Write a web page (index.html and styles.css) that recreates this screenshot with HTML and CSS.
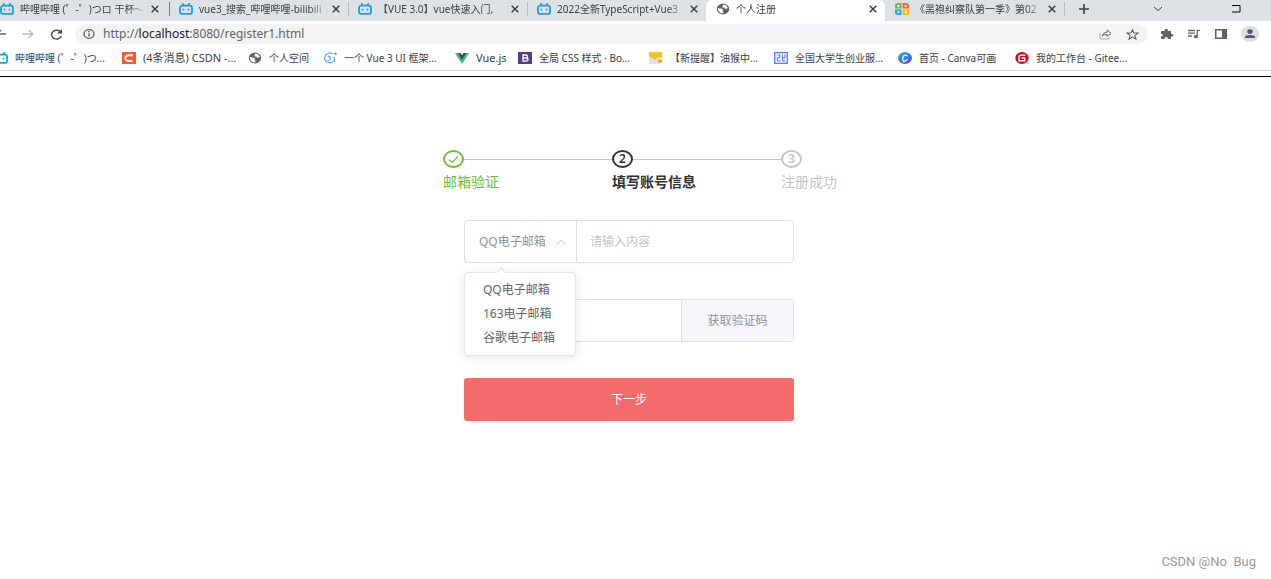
FILE: index.html
```html
<!DOCTYPE html>
<html lang="zh-CN">
<head>
<meta charset="utf-8">
<title>个人注册</title>
<link rel="stylesheet" href="styles.css">
</head>
<body>
<svg class="defs" aria-hidden="true">
  <symbol id="bili" viewBox="0 0 14 12"><path d="M3.5 0.5 5 2.3M10.5 0.5 9 2.3" stroke="#12a5dc" stroke-width="1.5" stroke-linecap="round"/><rect x="1" y="2.7" width="12" height="8.2" rx="2" fill="none" stroke="#12a5dc" stroke-width="1.8"/><path d="M4.5 5.8v1.8M9.5 5.8v1.8" stroke="#12a5dc" stroke-width="1.5"/></symbol>
  <symbol id="globe" viewBox="0 0 14 12"><ellipse cx="7" cy="6" rx="6.2" ry="5.4" fill="#5f6368"/><path d="M1.8 5.2 5 5.4 7.2 6.8 6.4 8.2 8 9.2 6.2 10.4Q2 9.7 1.8 5.2ZM7.2 1.6 10 2.2 12 5 9.4 6 8.2 4.6 6.2 4.4Z" fill="#fff"/></symbol>
  <symbol id="close" viewBox="0 0 10 10"><path d="M1.7 1.7 8.3 8.3M8.3 1.7 1.7 8.3" stroke="#3c4043" stroke-width="1.5"/></symbol>
</svg>
<header class="browser">
  <div class="tabs">
    <div class="tab first"><svg class="ico"><use href="#bili"/></svg><span class="tab-title">哔哩哔哩 (゜-゜)つロ 干杯~-</span><button class="close" aria-label="关闭"><svg><use href="#close"/></svg></button></div>
    <div class="tab line dark"><svg class="ico"><use href="#bili"/></svg><span class="tab-title">vue3_搜索_哔哩哔哩-bilibili</span><button class="close" aria-label="关闭"><svg><use href="#close"/></svg></button></div>
    <div class="tab line"><svg class="ico"><use href="#bili"/></svg><span class="tab-title">【VUE 3.0】vue快速入门,</span><button class="close" aria-label="关闭"><svg><use href="#close"/></svg></button></div>
    <div class="tab line"><svg class="ico"><use href="#bili"/></svg><span class="tab-title">2022全新TypeScript+Vue3</span><button class="close" aria-label="关闭"><svg><use href="#close"/></svg></button></div>
    <div class="tab active"><svg class="ico"><use href="#globe"/></svg><span class="tab-title">个人注册</span><button class="close" aria-label="关闭"><svg><use href="#close"/></svg></button></div>
    <div class="tab"><svg class="ico" viewBox="0 0 14 12"><path d="M3 0h3.4v5.4H0V3Q0 0 3 0Z" fill="#68bd45"/><path d="M7.6 0H11q3 0 3 3v2.4H7.6Z" fill="#f26522"/><path d="M0 6.6h6.4V12H3Q0 12 0 9Z" fill="#22a7e0"/><path d="M7.6 6.6H14V9q0 3-3 3H7.6Z" fill="#fcb814"/><path d="M2 3h2.6M9.5 3H12M2 9h2.6M9.5 9H12M3.4 1.7v2.6M10.7 1.7v2.6M3.4 7.7v2.6M10.7 7.7v2.6" stroke="#fff"/></svg><span class="tab-title">《黑袍纠察队第一季》第02</span><button class="close" aria-label="关闭"><svg><use href="#close"/></svg></button></div>
    <div class="strip-end line">
      <button class="plain" aria-label="新标签页"><svg width="12" height="10"><path d="M6 0v10M1 5h10" stroke="#3c4043" stroke-width="1.6"/></svg></button>
      <button class="plain chevron" aria-label="搜索标签页"><svg width="10" height="6"><path d="M1 1 5 4.5 9 1" fill="none" stroke="#3c4043"/></svg></button>
      <button class="plain" aria-label="还原窗口"><svg width="10" height="9"><path d="M1 1.5h8v6.5H1" fill="none" stroke="#000"/></svg></button>
    </div>
  </div>
  <div class="toolbar">
    <div class="nav">
      <button class="plain" aria-label="后退"><svg width="6" height="10"><path d="M0 5h6M0 2.5 1 1" stroke="#5f6368" stroke-width="1.3"/></svg></button>
      <button class="plain" aria-label="前进"><svg width="12" height="10"><path d="M0 5h11M6.5 1 11 5 6.5 9" fill="none" stroke="#babcbe" stroke-width="1.3"/></svg></button>
      <button class="plain" aria-label="刷新"><svg width="13" height="11"><path d="M10.8 3.4A5 4.4 0 1 0 11.3 7" fill="none" stroke="#4c4f53" stroke-width="1.5"/><path d="M12 0v4.6H7Z" fill="#4c4f53"/></svg></button>
    </div>
    <div class="address">
      <svg width="12" height="10"><ellipse cx="6" cy="5" rx="5" ry="4.3" fill="none" stroke="#5f6368" stroke-width="1.3"/><path d="M6 2v1.2M6 4.2v3.4" stroke="#5f6368" stroke-width="1.4"/></svg>
      <span class="url">http://<b>localhost</b>:8080/register1.html</span>
      <button class="plain" aria-label="分享"><svg width="13" height="11"><path d="M1 4v6h9V8" fill="none" stroke="#b0b3b6"/><path d="M3 7Q4 3.5 8 3.3V1l4 3.3-4 3V5.5Q5 5.3 3 7Z" fill="none" stroke="#5f6368"/></svg></button>
      <button class="plain" aria-label="收藏"><svg width="13" height="11"><path d="M6.5 .8 8 4h4L8.9 6.4 10 10.2 6.5 8 3 10.2 4.1 6.4 1 4h4Z" fill="none" stroke="#5f6368" stroke-width="1.1"/></svg></button>
    </div>
    <div class="tools">
      <button class="plain" aria-label="扩展程序"><svg width="14" height="12"><path d="M1 3h3.5Q4.3.7 6.2.7T8 3h3v2.8q2.4 0 2.4 1.5T11 8.7V11H8Q7.8 9 6.2 9T4.5 11H1V8.4q2-.1 2-1.3T1 5.8Z" fill="#5f6368"/></svg></button>
      <button class="plain" aria-label="媒体控制"><svg width="14" height="12"><path d="M1 2.5h7M1 5.2h7M1 8h4M10.3 8.5V2.3H13" fill="none" stroke="#5f6368" stroke-width="1.3"/><ellipse cx="8.9" cy="8.7" rx="2.1" ry="1.6" fill="#5f6368"/></svg></button>
      <button class="plain" aria-label="侧边栏"><svg width="14" height="12"><path d="M1.7 1.7h10.6v8.6H1.7Z" fill="none" stroke="#5f6368" stroke-width="1.5"/><path d="M8 1.7h4.3v8.6H8Z" fill="#5f6368"/></svg></button>
      <button class="plain" aria-label="用户"><svg width="18" height="16"><ellipse cx="9" cy="8" rx="9" ry="8" fill="#dadfe7"/><ellipse cx="9" cy="5.6" rx="2.7" ry="2.4" fill="#4c5a73"/><path d="M4 12V11q0-2 5-2t5 2v1Z" fill="#4c5a73"/></svg></button>
    </div>
  </div>
  <nav class="bookmarks">
    <a href="#" class="cut"><svg class="ico"><use href="#bili"/></svg>哔哩哔哩 (゜-゜)つ...</a>
    <a href="#" class="latin"><svg class="ico" viewBox="0 0 14 12"><path d="M0 0h14v12H0Z" fill="#fc5531"/><path d="M11 3.2H6.3Q3.8 3.2 3.5 6T6 8.9h4.4" fill="none" stroke="#fff" stroke-width="2"/></svg>(4条消息) CSDN -...</a>
    <a href="#"><svg class="ico"><use href="#globe"/></svg>个人空间</a>
    <a href="#"><svg class="ico" viewBox="0 0 14 12"><path d="M10.5 1.8 6.5.8 2.5 2.8 1.5 6.8l2 3 4 1.2 3.8-2V5" fill="none" stroke="#409eff" stroke-width="1.1"/><path d="M4.5 4.2h3.2L6.3 5.8q2 .2 1.3 1.7T4.5 8M11 1.8h3M12.5.5v2.6" fill="none" stroke="#409eff"/></svg>一个 Vue 3 UI 框架...</a>
    <a href="#" class="latin"><svg class="ico" viewBox="0 0 14 12"><path d="M0 1h14L7 12Z" fill="#41b883"/><path d="M3 1h8L7 8Z" fill="#35495e"/><path d="M5.5 1h3L7 3.3Z" fill="#fff"/></svg>Vue.js</a>
    <a href="#"><svg class="ico" viewBox="0 0 14 12"><path d="M0 0h14v12H0Z" fill="#563d7c"/><path d="M5 3h2.7Q9.5 3 9.5 4.5T7.7 6H5h3q2 0 2 1.6T8 9.2H5Z" fill="none" stroke="#fff" stroke-width="1.3"/></svg>全局 CSS 样式 · Bo...</a>
    <a href="#"><svg class="ico" viewBox="0 0 14 12"><path d="M0 4h11v8H0Z" fill="#d7e4fa"/><path d="M0 0h13v6L10 5 6 8 0 4Z" fill="#fbbf2c"/><circle cx="11" cy="9" r="2" fill="#f4a51c"/></svg>【新提醒】油猴中...</a>
    <a href="#"><svg class="ico" viewBox="0 0 14 12"><path d="M.7.7h12.6v10.6H.7Z" fill="#eaf0ff" stroke="#5b83e6" stroke-width="1.3"/><path d="M3.5 3H6v2.5H3.5V9h3M8.5 2.5v3.5h2.5V2.5M8.5 6v3H11" fill="none" stroke="#5b83e6"/></svg>全国大学生创业服...</a>
    <a href="#"><svg class="ico" viewBox="0 0 14 12"><defs><linearGradient id="cg" x1="0" y1="0" x2="1" y2="1"><stop offset="0" stop-color="#0bc8cf"/><stop offset="1" stop-color="#7130e8"/></linearGradient></defs><ellipse cx="7" cy="6" rx="7" ry="6" fill="url(#cg)"/><path d="M9.5 4.3Q8.5 2.5 6.5 3.4T4.8 7.5 7 9t2.7-1.3" fill="none" stroke="#fff" stroke-width="1.2"/></svg>首页 - Canva可画</a>
    <a href="#"><svg class="ico" viewBox="0 0 14 12"><ellipse cx="7" cy="6" rx="6.7" ry="6" fill="#d7061b"/><path d="M10.5 3.2H6Q4 3.2 4 5v3.8h5.7V6H6.5" fill="none" stroke="#fff" stroke-width="1.4"/></svg>我的工作台 - Gitee...</a>
  </nav>
</header>
<main class="page">
  <div class="register">
    <ol class="steps">
      <li class="step done"><div class="rail"><span class="dot"><svg width="11" height="9"><path d="M1 4.5 4.2 7.5 10 1.5" fill="none" stroke="currentColor" stroke-width="1.2"/></svg></span></div><span class="step-name">邮箱验证</span></li>
      <li class="step current"><div class="rail"><span class="dot">2</span></div><span class="step-name">填写账号信息</span></li>
      <li class="step last"><div class="rail"><span class="dot">3</span></div><span class="step-name">注册成功</span></li>
    </ol>
    <form class="form">
      <div class="field">
        <div class="picker">
          <select class="kind" aria-label="邮箱类型"><option>QQ电子邮箱</option><option>163电子邮箱</option><option>谷歌电子邮箱</option></select>
          <svg class="arrow" width="10" height="6"><path d="M1 5 5 1.2 9 5" fill="none" stroke="#c0c4cc"/></svg>
          <ul class="menu"><li>QQ电子邮箱</li><li>163电子邮箱</li><li>谷歌电子邮箱</li></ul>
        </div>
        <input class="text" type="text" placeholder="请输入内容" aria-label="邮箱账号">
      </div>
      <div class="field">
        <input class="text" type="text" aria-label="验证码">
        <button class="code" type="button">获取验证码</button>
      </div>
      <button class="next" type="button">下一步</button>
    </form>
  </div>
</main>
<footer class="mark">CSDN @No  Bug</footer>
</body>
</html>
```
FILE: styles.css
```css
* { box-sizing: border-box; }
body {
  margin: 0;
  min-height: 100vh;
  display: flex;
  flex-direction: column;
  overflow-x: hidden;
  background: #fff;
  color: #3c4043;
  font: 12px/16px "Noto Sans", "Noto Sans CJK SC", sans-serif;
}
button, input, select { font: inherit; color: inherit; margin: 0; }
.defs { position: absolute; width: 0; height: 0; }
.ico { width: 14px; height: 12px; flex: none; }
.plain, .close { display: flex; padding: 0; border: 0; background: none; }

/* Browser chrome */
.browser { border-bottom: 1px solid #000; padding-bottom: 5px; }
.tabs { display: flex; height: 21px; background: #dee1e6; font-size: 10px; }
.tab {
  flex: none;
  display: flex;
  align-items: center;
  width: 179px;
  padding: 0 7px 4px 10px;
}
.tab.first { width: 169px; padding-left: 0; padding-right: 9px; }
.tab.active { background: #fff; border-radius: 6px 6px 0 0; }
.line { background: linear-gradient(#b9bdc3, #b9bdc3) 0 2px / 1px 14px no-repeat; }
.line.dark { background-image: linear-gradient(#777b80, #777b80); }
.tab-title {
  flex: 1;
  min-width: 0;
  margin: 0 2px 0 6px;
  overflow: hidden;
  white-space: nowrap;
  mask-image: linear-gradient(to right, #000 85%, transparent);
}
.latin { font-size: 11px; }
.close svg { width: 10px; height: 10px; }
.strip-end { flex: 1; display: flex; align-items: center; padding: 0 30px 4px 14px; }
.chevron { margin: 0 68px 0 auto; }
.toolbar { display: flex; align-items: center; height: 26px; padding-right: 12px; }
.nav { display: flex; align-items: center; gap: 16px; width: 75px; }
.address {
  flex: 1;
  display: flex;
  align-items: center;
  gap: 14px;
  height: 20px;
  padding: 0 9px 0 8px;
  border-radius: 10px;
  background: #f1f3f4;
}
.url { flex: 1; margin-left: -6px; color: #5f6368; }
.url b { font-weight: normal; color: #202124; }
.tools { display: flex; align-items: center; gap: 13px; padding-left: 12px; }
.bookmarks {
  display: grid;
  grid-template-columns: 122px 126px 75px 132px 63px 131px 125px 124px 117px 1fr;
  height: 24px;
  border-bottom: 1px solid #d9dbde;
  font-size: 10px;
  overflow: hidden;
}
.bookmarks a { display: flex; align-items: center; gap: 7px; padding-bottom: 2px; color: inherit; text-decoration: none; white-space: nowrap; }
.bookmarks .cut { margin-left: -6px; }

/* Registration page */
.page { flex: 1; padding-top: 73px; }
.register { max-width: 385px; margin: 0 auto; }
.steps { display: grid; grid-template-columns: 169px 169px 1fr; margin: 0; padding: 0; list-style: none; color: #c0c4cc; }
.rail { background: linear-gradient(#c0c4cc, #c0c4cc) 0 9px / 100% 1px no-repeat; }
.last .rail { background: none; }
.dot {
  display: flex;
  align-items: center;
  justify-content: center;
  width: 21px;
  height: 18px;
  border: 2px solid currentColor;
  border-radius: 50%;
  background: #fff;
  font-weight: 600;
}
.step-name { display: block; margin-top: 4px; font-size: 14px; line-height: 20px; white-space: nowrap; }
.done { color: #67c23a; }
.current { color: #303133; font-weight: 700; }
.form { display: grid; gap: 36px; width: 330px; margin: 28px 0 0 21px; color: #909399; }
.field { display: flex; height: 43px; border: 1px solid #dcdfe6; border-radius: 4px; }
.text { flex: 1; min-width: 0; padding: 0 13px; border: 0; border-radius: 4px; background: none; outline: 0; }
.text::placeholder { color: #c0c4cc; opacity: 1; }
.picker { position: relative; display: flex; width: 112px; border-right: 1px solid #dcdfe6; }
.kind { flex: 1; padding: 0 14px; border: 0; background: none; appearance: none; outline: 0; }
.arrow { position: absolute; top: 18px; right: 10px; pointer-events: none; }
.menu {
  position: absolute;
  z-index: 1;
  top: 51px;
  left: -1px;
  width: 112px;
  margin: 0;
  padding: 5px 0;
  border: 1px solid #e4e7ed;
  border-radius: 4px;
  background: #fff;
  box-shadow: 0 2px 12px rgba(0, 0, 0, .1);
  color: #606266;
  list-style: none;
  line-height: 24px;
}
.menu::before {
  content: "";
  position: absolute;
  top: -4px;
  left: 32px;
  width: 7px;
  height: 7px;
  border: solid #e4e7ed;
  border-width: 1px 0 0 1px;
  background: #fff;
  transform: rotate(45deg);
}
.menu li { padding-left: 18px; }
.code { width: 112px; border: 0; border-left: 1px solid #dcdfe6; border-radius: 0 3px 3px 0; background: #f5f7fa; }
.next { height: 43px; border: 0; border-radius: 3px; background: #f56c6c; color: #fff; }
.mark { padding: 0 15px 8px; text-align: right; white-space: pre; color: #999; font: 13px/18px Roboto, sans-serif; }
```
